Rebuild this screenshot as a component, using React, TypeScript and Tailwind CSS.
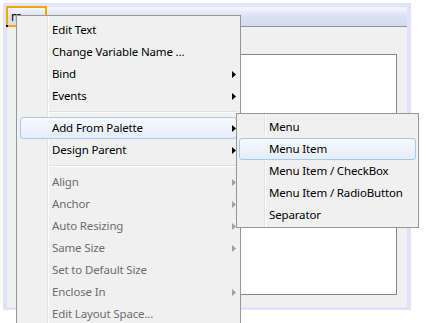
import React from "react";

type Item = { label?: string; sep?: boolean; arrow?: boolean; disabled?: boolean; hl?: boolean };

const mainItems: Item[] = [
  { label: "Edit Text" },
  { label: "Change Variable Name ..." },
  { label: "Bind", arrow: true },
  { label: "Events", arrow: true },
  { sep: true },
  { label: "Add From Palette", arrow: true, hl: true },
  { label: "Design Parent", arrow: true },
  { sep: true },
  { label: "Align", arrow: true, disabled: true },
  { label: "Anchor", arrow: true, disabled: true },
  { label: "Auto Resizing", arrow: true, disabled: true },
  { label: "Same Size", arrow: true, disabled: true },
  { label: "Set to Default Size", disabled: true },
  { label: "Enclose In", arrow: true, disabled: true },
  { label: "Edit Layout Space...", disabled: true },
];

const subItems: Item[] = [
  { label: "Menu" },
  { label: "Menu Item", hl: true },
  { label: "Menu Item / CheckBox" },
  { label: "Menu Item / RadioButton" },
  { label: "Separator" },
];

function Arrow({ disabled }: { disabled?: boolean }) {
  return (
    <svg width="4" height="7" viewBox="0 0 4 7" className="ml-auto shrink-0">
      <path d="M0 0 L4 3.5 L0 7 Z" fill={disabled ? "#a0a0a0" : "#000000"} />
    </svg>
  );
}

function Row({ it, main }: { it: Item; main: boolean }) {
  const hl = it.hl
    ? "border-[#a8caf0] bg-gradient-to-b from-[#f6f9fe] to-[#e5edf9]"
    : "border-transparent";
  return (
    <div
      className={`flex items-center h-[22px] rounded-[3px] border ${hl} ${
        main ? "mx-[3px] pl-[31px] pr-[0px]" : "mx-[2px] pl-[29px] pr-[3px]"
      }`}
    >
      <span className={`whitespace-nowrap leading-[18px] ${it.disabled ? "text-[#6d6d6d]" : "text-black"}`}>
        {it.label}
      </span>
      {it.arrow && <Arrow disabled={it.disabled} />}
    </div>
  );
}

export default function App() {
  const font = { fontFamily: '"Noto Sans", "Open Sans", sans-serif' };
  return (
    <div
      className="relative w-[439px] h-[323px] bg-white overflow-hidden text-[11.5px] tracking-[-0.15px]"
      style={font}
    >
      {/* designer window */}
      <div className="ml-[3px] mt-[3px] w-[408px] h-[307px] bg-[#e2e2fa] pt-[4px] px-[4px] pb-[3px] flex flex-col">
        <div className="h-[20px] bg-gradient-to-b from-[#f6f8fd] via-[#dbe1f3] to-[#d3daef] border-b border-[#8f949c] shrink-0 pl-[4px] pt-[2px] leading-[16px] text-[12px] text-black">
          m
        </div>
        <div className="flex-1 bg-[#f0f0f0] pt-[27px] pr-[10px] pb-[12px] pl-[10px] flex">
          <div className="flex-1 bg-white border border-[#828790]" />
        </div>
      </div>

      {/* selection marker */}
      <div className="absolute left-[6px] top-[6px] w-[41px] h-[21px] border-2 border-[#f7a600]" />
      <div className="absolute left-[6px] top-[25px] w-[2px] h-[2px] bg-black" />

      {/* main context menu */}
      <div className="absolute left-[16px] top-[15px] w-[225px] h-[330px] border border-[#979797] pt-[3px] flex flex-col bg-[linear-gradient(to_right,#f0f0f0_30px,#e2e3e3_30px,#e2e3e3_31px,#ffffff_31px,#ffffff_32px,#f0f0f0_32px)]">
        {mainItems.map((it, i) =>
          it.sep ? (
            <div key={i} className="h-[10px] flex flex-col justify-center pl-[32px] pr-[2px]">
              <div className="h-[1px] bg-[#e0e0e0]" />
              <div className="h-[1px] bg-white" />
            </div>
          ) : (
            <Row key={i} it={it} main />
          )
        )}
      </div>

      {/* submenu */}
      <div className="absolute left-[236px] top-[113px] w-[183px] border border-[#979797] pt-[2px] pb-[1px] flex flex-col bg-[linear-gradient(to_right,#f0f0f0_27px,#e2e3e3_27px,#e2e3e3_28px,#ffffff_28px,#ffffff_29px,#f0f0f0_29px)]">
        {subItems.map((it, i) => (
          <Row key={i} it={it} main={false} />
        ))}
      </div>
    </div>
  );
}
